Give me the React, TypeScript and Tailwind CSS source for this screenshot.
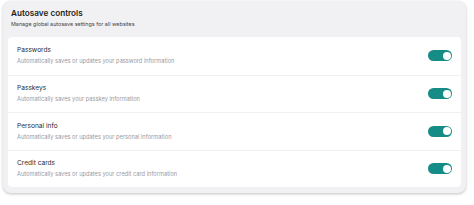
const rows = [
  { title: "Passwords", desc: "Automatically saves or updates your password information" },
  { title: "Passkeys", desc: "Automatically saves your passkey information" },
  { title: "Personal info", desc: "Automatically saves or updates your personal information" },
  { title: "Credit cards", desc: "Automatically saves or updates your credit card information" },
];

const Toggle = () => (
  <div className="w-[24px] h-[11px] rounded-full bg-[#168c86] flex items-center justify-end pr-[1.5px]">
    <div className="w-[8px] h-[8px] rounded-full bg-white" />
  </div>
);

export default function App() {
  return (
    <div className="w-[474px] h-[205px] bg-white font-['Inter',sans-serif] pt-[1px] px-[3px]">
      <div className="rounded-[8px] bg-[#f1f1f4] shadow-[0_1px_3px_rgba(0,0,0,0.25)] px-[5px] pb-[6px] w-[463px]">
        <div className="pt-[6px] pb-[7px] pl-[3px]">
          <p className="text-[8.2px] leading-[12px] font-semibold text-[#1f1f22]">Autosave controls</p>
          <p className="text-[5.4px] leading-[11px] text-[#444]">Manage global autosave settings for all websites</p>
        </div>
        <div className="bg-white rounded-[4px]">
          {rows.map((r, i) => (
            <div
              key={r.title}
              className={`h-[37.5px] flex items-center justify-between pl-[9px] pr-[9px] ${i > 0 ? "border-t border-[#f0f0f2]" : ""}`}
            >
              <div>
                <p className="text-[6.6px] leading-[11px] text-[#2a2a2e]">{r.title}</p>
                <p className="text-[5.7px] leading-[10px] text-[#9a9aa0]">{r.desc}</p>
              </div>
              <Toggle />
            </div>
          ))}
        </div>
      </div>
    </div>
  );
}
